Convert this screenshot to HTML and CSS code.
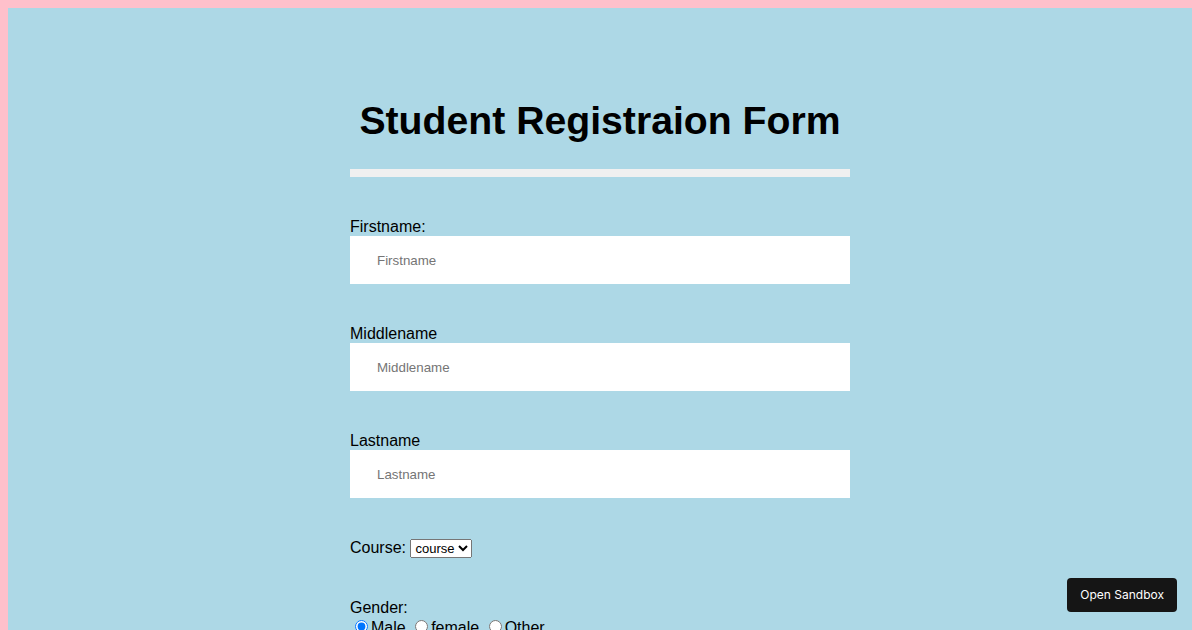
FILE: index.html
```html
<!DOCTYPE html>
<html lang="en">
<head>
  <meta charset="UTF-8">
  <title>Student Registration</title>
  <meta name="viewport" content="width=device-width, initial-scale=1.0">
  <link rel="stylesheet" href="styles.css">
</head>
<body>
  <div class="page">
    <div class="form-wrap">
      <h1>Student Registraion Form</h1>
      <div class="divider"></div>

      <form class="reg-form">
        <div class="field">
          <label for="firstname">Firstname:</label>
          <input type="text" id="firstname" placeholder="Firstname">
        </div>

        <div class="field">
          <label for="middlename">Middlename</label>
          <input type="text" id="middlename" placeholder="Middlename">
        </div>

        <div class="field">
          <label for="lastname">Lastname</label>
          <input type="text" id="lastname" placeholder="Lastname">
        </div>

        <div class="field inline">
          Course:
          <select id="course">
            <option>course</option>
            <option>BCA</option>
            <option>BBA</option>
            <option>B.Tech</option>
          </select>
        </div>

        <div class="field">
          <div>Gender:</div>
          <div class="radios">
            <input type="radio" name="gender" id="male" checked><label for="male">Male</label>
            <input type="radio" name="gender" id="female"><label for="female">female</label>
            <input type="radio" name="gender" id="other"><label for="other">Other</label>
          </div>
        </div>
      </form>
    </div>
  </div>

  <a class="sandbox-btn" href="#">Open Sandbox</a>
</body>
</html>
```

FILE: styles.css
```css
body {
  margin: 8px;
  background-color: pink;
  font-family: "Liberation Sans", Arial, sans-serif;
  font-size: 16px;
  color: #000;
}
.page {
  background-color: lightblue;
  min-height: 700px;
  padding-top: 90px;
}
.form-wrap {
  width: 500px;
  margin: 0 auto;
}
h1 {
  margin: 0;
  font-size: 39.2px;
  line-height: 46px;
  text-align: center;
}
.divider {
  height: 8px;
  background-color: #f0f0f0;
  margin-top: 25px;
}
.reg-form {
  display: flex;
  flex-direction: column;
  gap: 41px;
  padding-top: 41px;
}
.field label {
  display: block;
}
.field input[type="text"] {
  display: block;
  box-sizing: border-box;
  width: 100%;
  height: 48px;
  border: none;
  padding: 0 27px;
  font-family: "Liberation Sans", Arial, sans-serif;
  font-size: 13.33px;
  background: white;
  outline: none;
}
.field.inline select {
  font-family: "Liberation Sans", Arial, sans-serif;
  font-size: 13px;
  margin-left: 0;
}
.radios label {
  display: inline;
}
.radios input {
  margin: 3px 3px 0 5px;
}
.sandbox-btn {
  position: fixed;
  right: 23px;
  bottom: 18px;
  background-color: #151515;
  color: white;
  text-decoration: none;
  font-family: Inter, "Liberation Sans", sans-serif;
  font-size: 12px;
  padding: 9px 13px;
  border-radius: 4px;
  line-height: 16px;
}
```
